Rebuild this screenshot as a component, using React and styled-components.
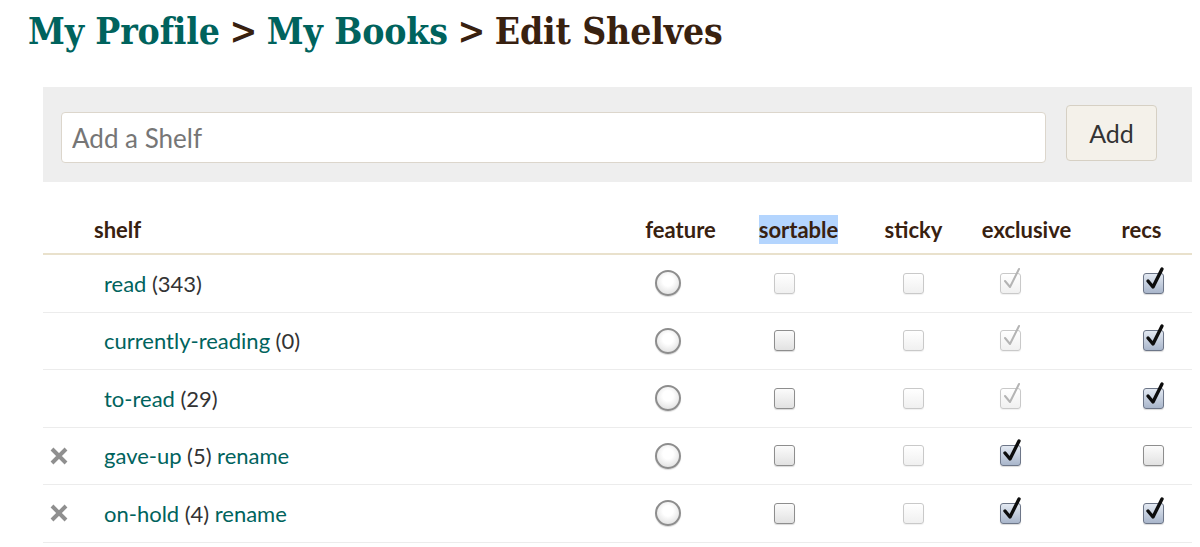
import React from "react";
import styled, { createGlobalStyle } from "styled-components";

const Global = createGlobalStyle`
  html, body { margin: 0; padding: 0; background: #ffffff; }
  body { font-family: Lato, "Noto Sans", sans-serif; color: #333333; }
`;

const Page = styled.div`
  width: 1200px;
  height: 547px;
  overflow: hidden;
  display: flex;
  flex-direction: column;
`;

const Title = styled.h1`
  margin: 6px 0 0 28px;
  font-family: "DejaVu Serif Condensed", "DejaVu Serif", serif;
  font-weight: 700;
  font-size: 37px;
  letter-spacing: -0.15px;
  line-height: 50px;
  color: #382110;
  white-space: nowrap;
`;

const Crumb = styled.a`
  color: #00635d;
  text-decoration: none;
`;

const Sep = styled.span`
  color: #382110;
  margin: 0 0.26em;
`;

const Content = styled.div`
  margin: 31px 0 0 43px;
  width: 1149px;
`;

const AddPanel = styled.form`
  display: flex;
  align-items: flex-start;
  gap: 20px;
  height: 95px;
  box-sizing: border-box;
  padding: 18px 35px 0 18px;
  background: #eeeeee;
`;

const ShelfInput = styled.input`
  flex: 1;
  margin-top: 7px;
  height: 51px;
  box-sizing: border-box;
  padding: 0 10px;
  border: 1px solid #dcd6cc;
  border-radius: 4px;
  background: #ffffff;
  font-family: Lato, sans-serif;
  font-size: 26px;
  color: #333;
  outline: none;
  &::placeholder { color: #767676; }
`;

const AddButton = styled.button`
  width: 91px;
  height: 56px;
  box-sizing: border-box;
  border: 1px solid #d6d0c4;
  border-radius: 4px;
  background: #f4f1ea;
  font-family: Lato, sans-serif;
  font-size: 25px;
  color: #333333;
  padding: 0;
`;

const Table = styled.div`
  margin-top: 23px;
  display: grid;
  grid-template-columns: 51px 1fr repeat(5, 117px);
`;

const HeadCell = styled.div`
  height: 48px;
  border-bottom: 2px solid #e9e1cc;
  display: flex;
  align-items: center;
  justify-content: ${(p) => (p.$left ? "flex-start" : "center")};
  padding-left: ${(p) => (p.$left ? 0 : p.$dx)}px;
  font-weight: 700;
  font-size: 22px;
  color: #382110;
`;

const HeadLabel = styled.span`
  background: ${(p) => (p.$selected ? "#b4d5fe" : "transparent")};
  padding: 1px 0;
`;

const Cell = styled.div`
  height: 56.5px;
  border-bottom: 1px solid #ececec;
  display: flex;
  align-items: center;
  justify-content: ${(p) => (p.$center ? "center" : "flex-start")};
  padding-left: ${(p) => Math.max(p.$dx || 0, 0)}px;
  padding-right: ${(p) => Math.max(-(p.$dx || 0), 0)}px;
  font-size: 22px;
`;

const ShelfLink = styled.a`
  color: #00635d;
  text-decoration: none;
  margin-left: 10px;
`;

const Count = styled.span`
  color: #333333;
  margin: 0 0.25em;
`;

const RenameLink = styled.a`
  color: #00635d;
  text-decoration: none;
`;

const DeleteIcon = styled.svg`
  width: 20px;
  height: 20px;
  margin-left: 6px;
`;

const Radio = styled.span`
  display: block;
  width: 22px;
  height: 22px;
  border-radius: 50%;
  border: 2px solid #8d8d8d;
  background: radial-gradient(circle at 50% 40%, #ffffff 30%, #dcdcdc 90%);
  box-shadow: 0 1px 1px rgba(0, 0, 0, 0.15);
`;

const Box = styled.span`
  position: relative;
  display: block;
  width: 19px;
  height: 19px;
  border-radius: 3px;
  border: 1.5px solid ${(p) => (p.$disabled ? "#c9c9c9" : p.$checked ? "#6d7688" : "#8e8e8e")};
  background: ${(p) =>
    p.$checked && !p.$disabled
      ? "linear-gradient(#e3e9f2, #a9b6cb)"
      : p.$disabled
      ? "linear-gradient(#ffffff, #f0f0f0)"
      : "linear-gradient(#fbfbfb, #e2e2e2)"};
  box-shadow: 0 1px 1px rgba(0, 0, 0, ${(p) => (p.$disabled ? 0.06 : 0.15)});
`;

const Check = styled.svg`
  position: absolute;
  left: 1px;
  top: -7px;
  width: 20px;
  height: 24px;
  overflow: visible;
`;

function CheckBox({ checked, disabled }) {
  return (
    <Box $checked={checked} $disabled={disabled}>
      {checked && (
        <Check viewBox="0 0 20 24">
          <path
            d="M3 14 L8 20 L17 2"
            fill="none"
            stroke={disabled ? "#b4b4b4" : "#0d0d0d"}
            strokeWidth={disabled ? 2 : 3.4}
            strokeLinecap="round"
            strokeLinejoin="round"
          />
        </Check>
      )}
    </Box>
  );
}

const columns = [
  { key: "feature", dx: 4, head: 30 },
  { key: "sortable", dx: 3, head: 32, selected: true },
  { key: "sticky", dx: 27, head: 28 },
  { key: "exclusive", dx: -13, head: 20 },
  { key: "recs", dx: 39, head: 16 },
];

const shelves = [
  { name: "read", count: 343, fixed: true, sortable: "off-dis", exclusive: "dis-on", recs: "on" },
  { name: "currently-reading", count: 0, fixed: true, sortable: "off", exclusive: "dis-on", recs: "on" },
  { name: "to-read", count: 29, fixed: true, sortable: "off", exclusive: "dis-on", recs: "on" },
  { name: "gave-up", count: 5, fixed: false, sortable: "off", exclusive: "on", recs: "off" },
  { name: "on-hold", count: 4, fixed: false, sortable: "off", exclusive: "on", recs: "on" },
];

function stateBox(state) {
  return (
    <CheckBox
      checked={state === "on" || state === "dis-on"}
      disabled={state === "off-dis" || state === "dis-on"}
    />
  );
}

export default function App() {
  return (
    <Page>
      <Global />
      <Title>
        <Crumb href="#">My Profile</Crumb>
        <Sep>&gt;</Sep>
        <Crumb href="#">My Books</Crumb>
        <Sep>&gt;</Sep>
        Edit Shelves
      </Title>
      <Content>
        <AddPanel onSubmit={(e) => e.preventDefault()}>
          <ShelfInput placeholder="Add a Shelf" />
          <AddButton type="submit">Add</AddButton>
        </AddPanel>
        <Table>
          <HeadCell $left />
          <HeadCell $left>
            <HeadLabel>shelf</HeadLabel>
          </HeadCell>
          {columns.map((c) => (
            <HeadCell key={c.key} $dx={c.head}>
              <HeadLabel $selected={c.selected}>{c.key}</HeadLabel>
            </HeadCell>
          ))}
          {shelves.map((s) => (
            <React.Fragment key={s.name}>
              <Cell>
                {!s.fixed && (
                  <DeleteIcon viewBox="0 0 20 20">
                    <path
                      d="M3 3 L17 17 M17 3 L3 17"
                      stroke="#8f8f8f"
                      strokeWidth="4"
                      strokeLinecap="butt"
                    />
                  </DeleteIcon>
                )}
              </Cell>
              <Cell>
                <ShelfLink href="#">{s.name}</ShelfLink>
                <Count>({s.count})</Count>
                {!s.fixed && <RenameLink href="#">rename</RenameLink>}
              </Cell>
              <Cell $center $dx={columns[0].dx}>
                <Radio />
              </Cell>
              <Cell $center $dx={columns[1].dx}>
                {stateBox(s.sortable)}
              </Cell>
              <Cell $center $dx={columns[2].dx}>
                {stateBox("off-dis")}
              </Cell>
              <Cell $center $dx={columns[3].dx}>
                {stateBox(s.exclusive)}
              </Cell>
              <Cell $center $dx={columns[4].dx}>
                {stateBox(s.recs)}
              </Cell>
            </React.Fragment>
          ))}
        </Table>
      </Content>
    </Page>
  );
}
